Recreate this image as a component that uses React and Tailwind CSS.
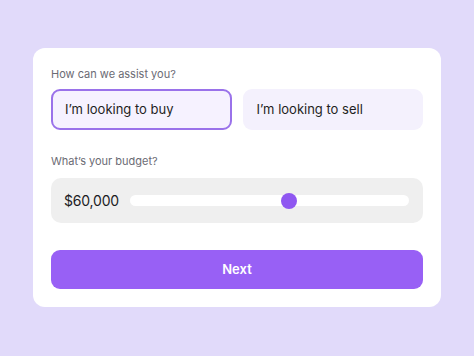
import React, { useState } from 'react';

const font = { fontFamily: 'Inter, "Noto Sans", sans-serif' };

const ChoiceButton = ({ label, selected, onClick }) => (
  <button
    onClick={onClick}
    className={`flex-1 h-[41px] rounded-[9px] text-left pl-[12px] text-[13px] text-[#1f1f23] ${
      selected ? 'bg-[#f6f2ff] border-2 border-[#9a72ea]' : 'bg-[#f4f1fd] border-2 border-transparent'
    }`}
  >
    {label}
  </button>
);

export default function App() {
  const [choice, setChoice] = useState('buy');
  const [budget] = useState(60000);
  const pct = 57;

  return (
    <div className="w-[474px] h-[356px] bg-[#e1dafa] pt-[48px] pl-[33px]" style={font}>
      <div className="w-[408px] h-[259px] bg-white rounded-[12px] px-[18px] pt-[18px]">
        <div className="text-[11px] leading-[16px] text-[#6b6b74] h-[16px]">How can we assist you?</div>
        <div className="flex gap-[11px] mt-[7px]">
          <ChoiceButton label="I’m looking to buy" selected={choice === 'buy'} onClick={() => setChoice('buy')} />
          <ChoiceButton label="I’m looking to sell" selected={choice === 'sell'} onClick={() => setChoice('sell')} />
        </div>
        <div className="text-[11px] leading-[16px] text-[#6b6b74] mt-[23px]">What’s your budget?</div>
        <div className="mt-[9px] h-[45px] bg-[#efefef] rounded-[10px] flex items-center pl-[13px] pr-[14px] gap-[10px]">
          <span className="text-[14px] tracking-[-0.2px] text-[#1c1c1f] w-[56px]">${budget.toLocaleString('en-US')}</span>
          <div className="relative flex-1 h-[11px] bg-white rounded-full">
            <div
              className="absolute top-1/2 w-[16px] h-[16px] -mt-[8px] -ml-[8px] rounded-full bg-[#8f57f1]"
              style={{ left: `${pct}%` }}
            />
          </div>
        </div>
        <button className="mt-[27px] w-full h-[39px] rounded-[9px] bg-[#9860f5] text-white text-[13px] font-semibold">
          Next
        </button>
      </div>
    </div>
  );
}
